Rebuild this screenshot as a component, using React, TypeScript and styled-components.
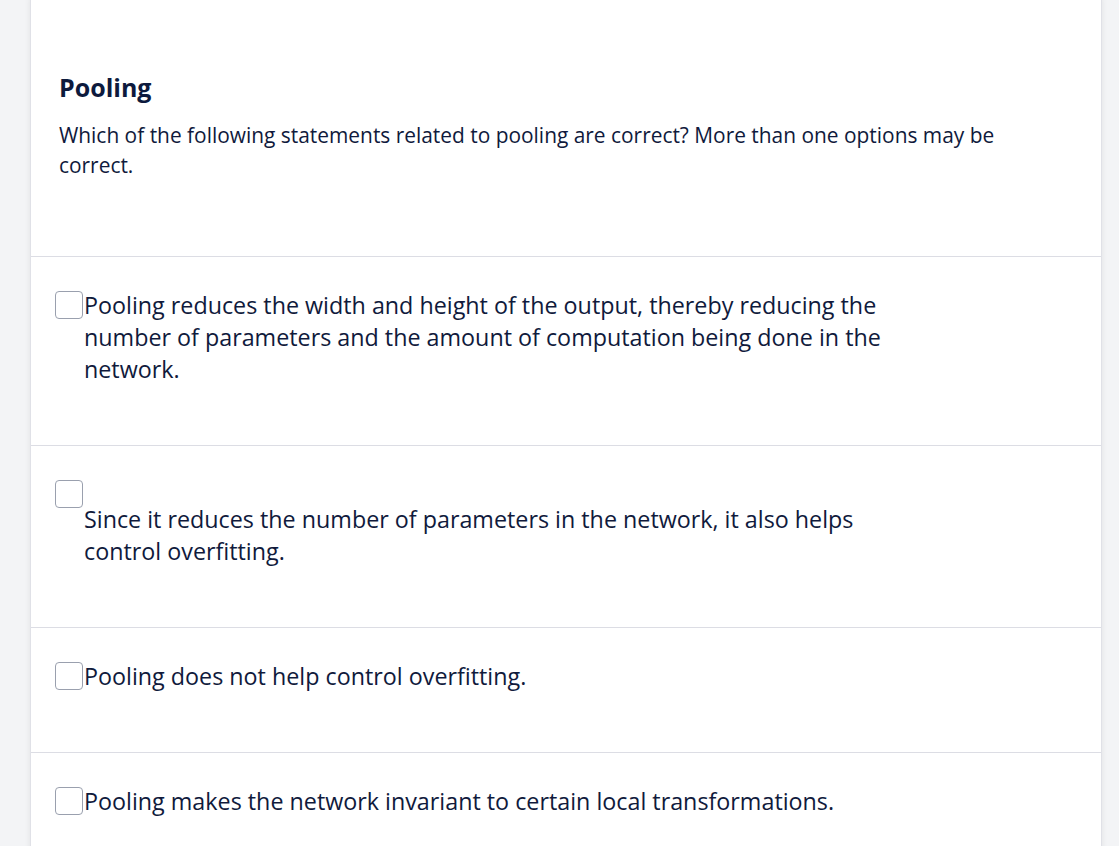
import React from "react";
import styled, { createGlobalStyle } from "styled-components";

const Global = createGlobalStyle`
  html, body { margin: 0; padding: 0; background: #f3f4f6; }
  body { font-family: "Open Sans", "Noto Sans", sans-serif; color: #101a3c; }
  * { box-sizing: border-box; }
`;

const Page = styled.div`
  display: flex;
  padding-left: 30px;
  padding-right: 17px;
  min-height: 846px;
`;

const Card = styled.div`
  flex: 1;
  background: #ffffff;
  border-left: 1px solid #e0e1e7;
  border-right: 1px solid #e0e1e7;
  box-shadow: 0 -2px 6px rgba(0, 0, 0, 0.08);
`;

const Header = styled.div`
  padding: 70px 100px 48px 28px;
  height: 256px;
`;

const Title = styled.h2`
  margin: 0 0 16px 0;
  font-size: 25px;
  font-weight: 700;
  line-height: 34px;
  color: #0d1a3d;
`;

const Prompt = styled.p`
  margin: 0;
  font-size: 20.9px;
  line-height: 30px;
  color: #101a3c;
`;

const Option = styled.label`
  display: block;
  border-top: 1px solid #dcdde4;
  padding: 34px 24px 58px 24px;
  background: #fff;
`;

const Row = styled.div<{ $stacked?: boolean }>`
  display: ${(p) => (p.$stacked ? "block" : "flex")};
  align-items: flex-start;
`;

const Box = styled.span`
  display: block;
  flex: none;
  width: 28px;
  height: 28px;
  border: 1px solid #9aa0ae;
  border-radius: 4px;
  background: #fff;
`;

const Text = styled.div<{ $stacked?: boolean }>`
  font-size: 23.3px;
  line-height: 32px;
  color: #101a3c;
  max-width: 830px;
  margin-left: ${(p) => (p.$stacked ? "29px" : "1px")};
  margin-top: ${(p) => (p.$stacked ? "-5px" : "-2px")};
  margin-bottom: 2px;
`;

const options = [
  {
    text: "Pooling reduces the width and height of the output, thereby reducing the number of parameters and the amount of computation being done in the network.",
    stacked: false,
  },
  {
    text: "Since it reduces the number of parameters in the network, it also helps control overfitting.",
    stacked: true,
  },
  { text: "Pooling does not help control overfitting.", stacked: false },
  { text: "Pooling makes the network invariant to certain local transformations.", stacked: false },
];

export default function App() {
  return (
    <>
      <Global />
      <Page>
        <Card>
          <Header>
            <Title>Pooling</Title>
            <Prompt>
              Which of the following statements related to pooling are correct? More than one options may be correct.
            </Prompt>
          </Header>
          {options.map((o, i) => (
            <Option key={i}>
              <Row $stacked={o.stacked}>
                <Box />
                <Text $stacked={o.stacked}>{o.text}</Text>
              </Row>
            </Option>
          ))}
        </Card>
      </Page>
    </>
  );
}
